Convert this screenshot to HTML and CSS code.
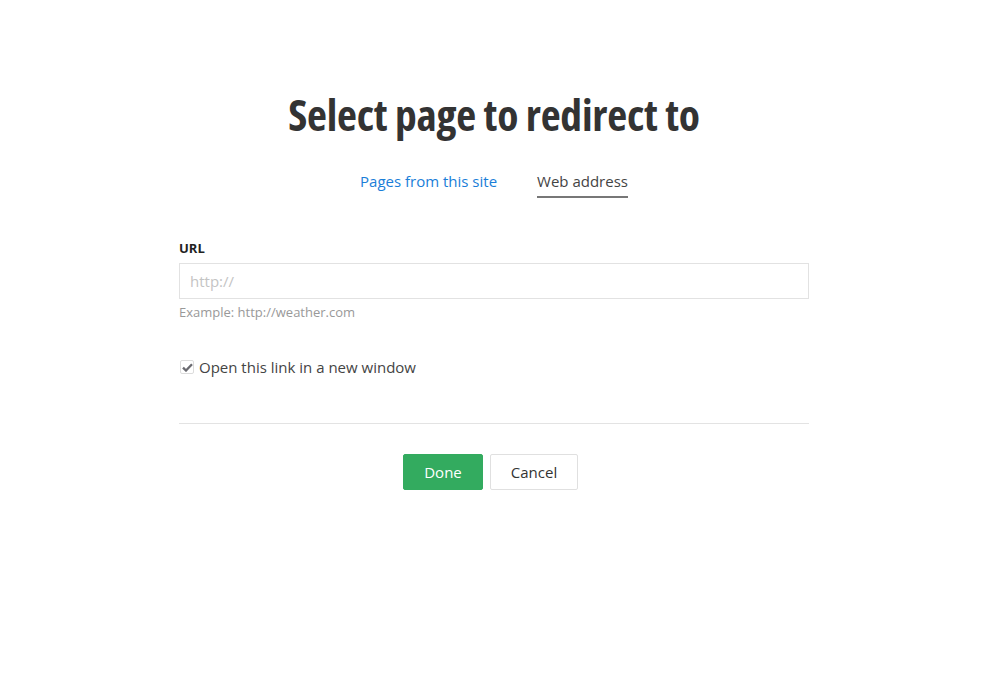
FILE: index.html
```html
<!DOCTYPE html>
<html>
<head>
<meta charset="utf-8">
<link rel="stylesheet" href="styles.css">
</head>
<body>
<div class="page">
  <div class="dialog">
    <h1 class="title">Select page to redirect to</h1>
    <div class="tabs">
      <a class="tab">Pages from this site</a>
      <a class="tab tab-active">Web address</a>
    </div>
    <div class="form">
      <label class="label">URL</label>
      <div class="input"><span class="placeholder">http://</span></div>
      <div class="hint">Example: http://weather.com</div>
      <div class="check-row">
        <span class="checkbox">
          <svg width="11" height="9" viewBox="0 0 11 9"><path d="M1 4.6 L4 7.5 L10 1.2" fill="none" stroke="#6a6a70" stroke-width="2.3"/></svg>
        </span>
        <span class="check-label">Open this link in a new window</span>
      </div>
      <div class="divider"></div>
      <div class="actions">
        <button class="btn btn-primary">Done</button>
        <button class="btn btn-default">Cancel</button>
      </div>
    </div>
  </div>
</div>
</body>
</html>
```

FILE: styles.css
```css
* { box-sizing: border-box; }
html, body { margin: 0; padding: 0; background: #fff; }
body { font-family: "Open Sans", "Liberation Sans", sans-serif; color: #333; }
.page { width: 988px; }
.dialog { width: 630px; margin: 0 auto; padding-top: 86px; }
.title {
  margin: 0;
  text-align: center;
  font-size: 43.5px;
  font-weight: 700;
  font-stretch: 75%;
  line-height: 58px;
  color: #333;
  letter-spacing: -0.2px;
}
.tabs { display: flex; justify-content: center; gap: 40px; margin-top: 27px; }
.tab {
  font-size: 15px;
  line-height: 20px;
  color: #1a7ed8;
  padding-bottom: 5px;
  border-bottom: 2px solid transparent;
}
.tab-active { color: #444; border-bottom-color: #777; }
.form { margin-top: 41px; }
.label { display: block; font-size: 13px; font-weight: 700; color: #222; line-height: 18px; }
.input {
  margin-top: 6px;
  height: 36px;
  border: 1px solid #e2e2e2;
  padding: 0 10px;
  display: flex;
  align-items: center;
}
.placeholder { font-size: 15px; color: #c4c4c4; }
.hint { margin-top: 4px; font-size: 13px; color: #999; line-height: 18px; }
.check-row { display: flex; align-items: center; margin-top: 36px; gap: 5px; }
.checkbox {
  width: 14px; height: 14px;
  border: 1px solid #dcdcdc;
  border-radius: 2px;
  display: flex; align-items: center; justify-content: center;
  margin-left: 1px;
}
.check-label { font-size: 15px; color: #444; line-height: 20px; }
.divider { margin-top: 46px; border-top: 1px solid #e3e3e3; }
.actions { display: flex; justify-content: center; gap: 7px; margin-top: 30px; padding-right: 7px; }
.btn {
  height: 36px;
  font-family: "Open Sans", "Liberation Sans", sans-serif;
  font-size: 15px;
  border-radius: 2px;
  padding: 0;
}
.btn-primary { width: 80px; background: #33ab5f; color: #fff; border: 1px solid #33ab5f; }
.btn-default { width: 88px; background: #fff; color: #333; border: 1px solid #e0e0e0; }
```
